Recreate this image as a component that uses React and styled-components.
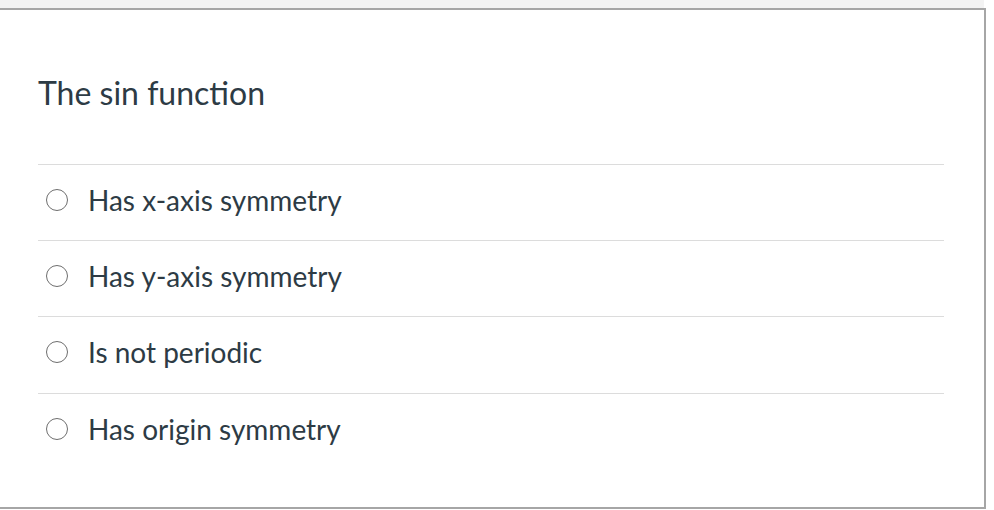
import React from "react";
import styled, { createGlobalStyle } from "styled-components";

const Global = createGlobalStyle`
  html, body {
    margin: 0;
    padding: 0;
    background: #ffffff;
  }
  body {
    font-family: Lato, "Liberation Sans", sans-serif;
  }
`;

const TopStrip = styled.div`
  height: 8px;
  width: 984px;
  background: #f3f3f3;
`;

const Panel = styled.div`
  width: 986px;
  height: 501px;
  box-sizing: border-box;
  border-top: 2px solid #a6a6a6;
  border-right: 2px solid #a6a6a6;
  border-bottom: 2px solid #a6a6a6;
  background: #ffffff;
  padding: 0 40px 0 38px;
`;

const Question = styled.p`
  margin: 0;
  padding-top: 67px;
  box-sizing: border-box;
  height: 154px;
  font-size: 32px;
  line-height: 32px;
  color: #2d3b45;
`;

const Answers = styled.div`
  display: flex;
  flex-direction: column;
`;

const Answer = styled.label`
  display: flex;
  align-items: center;
  box-sizing: border-box;
  height: 76px;
  padding: 0 0 6px 8px;
  border-top: 1px solid #dcdcdc;
  gap: 20px;
  font-size: 28px;
  line-height: 32px;
  color: #2d3b45;
  cursor: pointer;
  &:nth-child(3) {
    height: 77px;
  }
`;

const Radio = styled.span`
  display: block;
  box-sizing: border-box;
  width: 22px;
  height: 22px;
  border-radius: 50%;
  border: 1.7px solid #6e6e6e;
  flex: 0 0 22px;
  background: #fff;
`;

const answers = [
  "Has x-axis symmetry",
  "Has y-axis symmetry",
  "Is not periodic",
  "Has origin symmetry",
];

const App = () => {
  return (
    <>
      <Global />
      <TopStrip />
      <Panel>
        <Question>The sin function</Question>
        <Answers>
          {answers.map((a) => (
            <Answer key={a}>
              <Radio />
              {a}
            </Answer>
          ))}
        </Answers>
      </Panel>
    </>
  );
};

export default App;
